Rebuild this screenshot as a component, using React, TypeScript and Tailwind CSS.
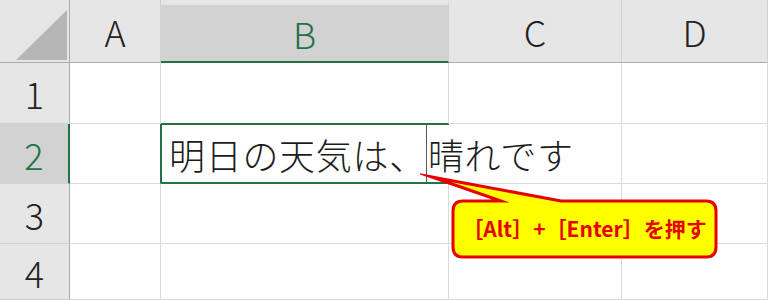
const jp = "font-['Noto_Sans_CJK_JP','Noto_Sans',sans-serif]";

const colHead = `flex items-center justify-center bg-[#e6e6e6] border-r border-b border-r-[#d0d0d0] border-b-[#ababab] text-[36px] font-light text-[#222] ${jp}`;
const rowHead = `flex items-center justify-center bg-[#e6e6e6] border-r border-b border-r-[#ababab] border-b-[#d0d0d0] text-[36px] font-light text-[#222] ${jp}`;
const cell = "border-r border-b border-[#dadada]";

const Corner = () => (
  <div className="bg-[#e6e6e6] border-r border-b border-r-[#ababab] border-b-[#ababab]">
    <svg width="69" height="62" viewBox="0 0 69 62">
      <polygon points="67,10 67,60 16,60" fill="#b6b6b6" />
    </svg>
  </div>
);

const Callout = () => (
  <div className="absolute left-[420px] top-[170px] w-[310px] h-[95px]">
    <svg width="310" height="95" viewBox="0 0 310 95" className="absolute inset-0">
      <path
        d="M 43 31 L 81 31 L 12 7 L 141 31 L 286 31 Q 296 31 296 41 L 296 77 Q 296 87 286 87 L 43 87 Q 33 87 33 77 L 33 41 Q 33 31 43 31 Z"
        fill="#ffff00"
        stroke="#e60000"
        strokeWidth="3"
        strokeLinejoin="miter"
        strokeMiterlimit="20"
      />
    </svg>
    <div
      className={`absolute left-[33px] top-[31px] w-[263px] h-[56px] flex items-center justify-center text-[21px] font-bold text-[#e60000] whitespace-nowrap ${jp}`}
    >
      ［Alt］+［Enter］を押す
    </div>
  </div>
);

export default function App() {
  return (
    <div className="relative w-[768px] h-[300px] bg-white overflow-hidden">
      <div className="grid grid-cols-[70px_91px_288px_173px_146px] grid-rows-[63px_61px_60px_60px_56px] w-[768px] h-[300px]">
        {/* header row */}
        <Corner />
        <div className={colHead}>A</div>
        <div className={`flex items-center justify-center bg-[#d2d2d2] border-t-[5px] border-t-[#e6e6e6] border-r border-r-[#d0d0d0] border-b-2 border-b-[#217346] text-[36px] font-light text-[#217346] ${jp}`}>
          B
        </div>
        <div className={colHead}>C</div>
        <div className={colHead}>D</div>

        {/* row 1 */}
        <div className={rowHead}>1</div>
        <div className={cell} />
        <div className="border-r border-r-[#dadada] border-b border-b-[#217346]" />
        <div className={cell} />
        <div className={cell} />

        {/* row 2 */}
        <div className={`flex items-center justify-center bg-[#d2d2d2] border-r-2 border-r-[#217346] border-b border-b-[#d0d0d0] text-[36px] font-light text-[#217346] ${jp}`}>
          2
        </div>
        <div className="border-r border-r-[#217346] border-b border-b-[#dadada]" />
        <div className={`flex items-stretch pl-[7px] border-l border-t border-b-2 border-[#217346] whitespace-nowrap text-[36px] font-light text-[#1c1c1c] tracking-[0.7px] ${jp}`}>
          <span className="self-center leading-none">明日の天気は、</span>
          <span className="w-px shrink-0 bg-[#595959]" />
          <span className="self-center leading-none pl-px">晴れです</span>
        </div>
        <div className={cell} />
        <div className={cell} />

        {/* row 3 */}
        <div className={rowHead}>3</div>
        <div className={cell} />
        <div className={cell} />
        <div className={cell} />
        <div className={cell} />

        {/* row 4 */}
        <div className={rowHead}>4</div>
        <div className={cell} />
        <div className={cell} />
        <div className={cell} />
        <div className={cell} />
      </div>
      <Callout />
    </div>
  );
}
